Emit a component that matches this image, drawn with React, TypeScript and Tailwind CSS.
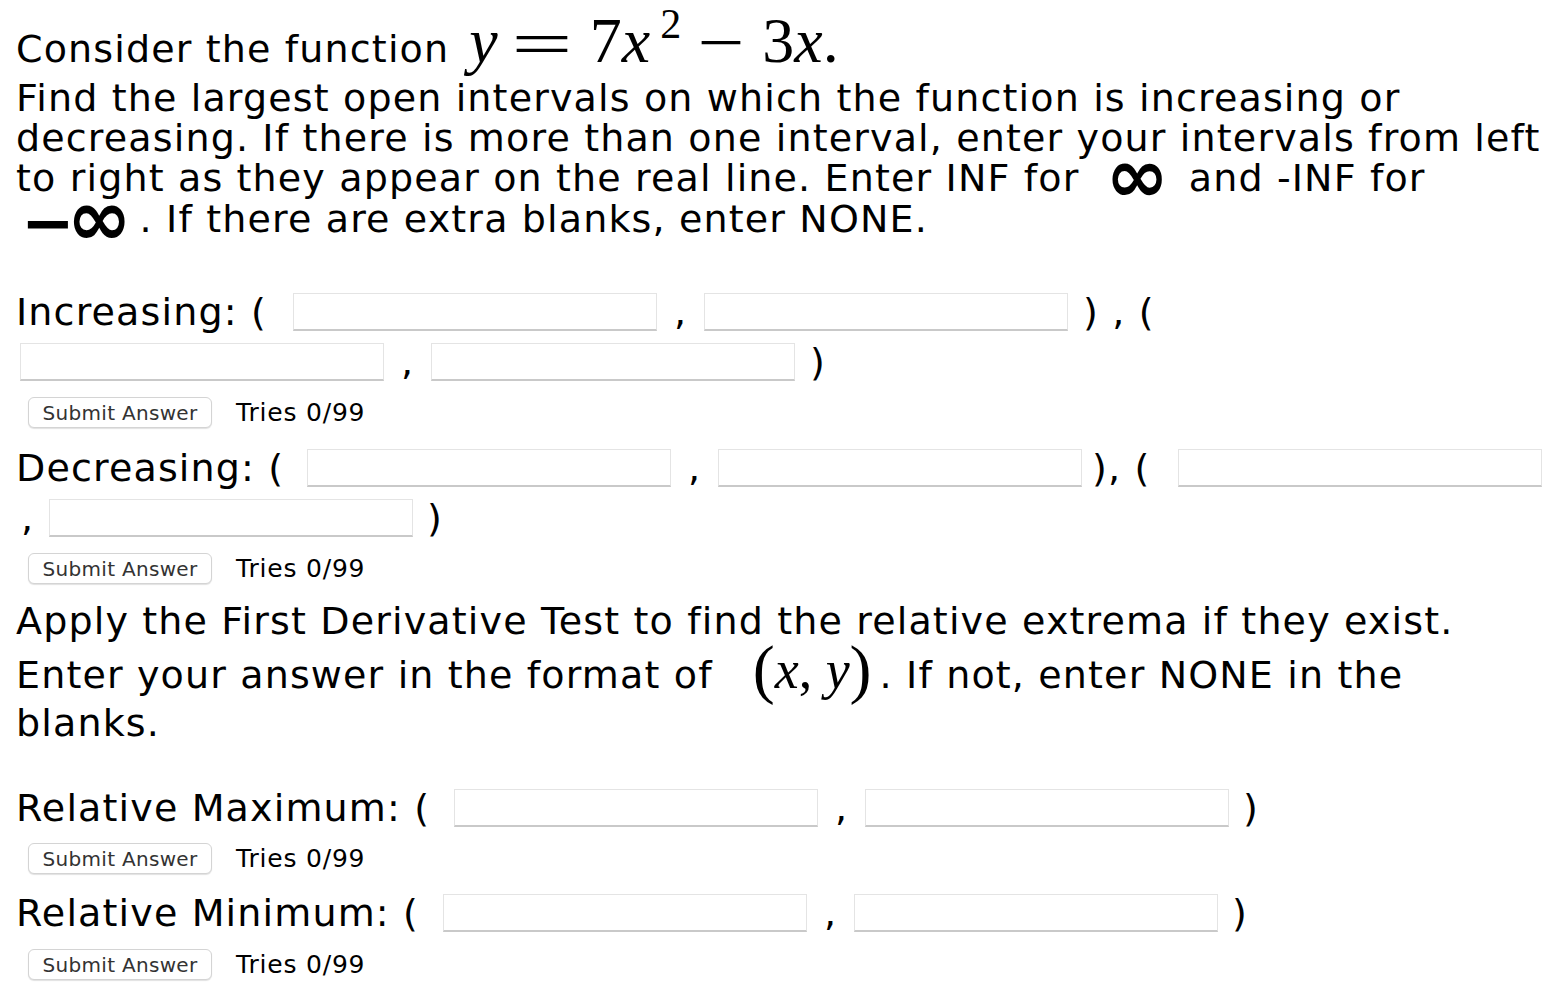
import React from "react";

const sans = { fontFamily: '"DejaVu Sans", Verdana, sans-serif' };
const serif = { fontFamily: '"Liberation Serif", "Times New Roman", serif' };

function Blank({ className = "" }: { className?: string }) {
  return (
    <input
      type="text"
      className={`h-[38px] w-[364px] shrink-0 bg-white border border-[#e4e4e4] border-b-2 border-b-[#c9c9c9] outline-none ${className}`}
    />
  );
}

function Comma() {
  return <span className="w-[47px] shrink-0 text-center">,</span>;
}

function SubmitRow() {
  return (
    <div className="flex items-center h-[31px] pl-[12px]">
      <button className="h-[31px] w-[184px] rounded-[6px] border border-[#d4d4d4] bg-white text-[20px] tracking-[0.3px] text-[#333] shadow-[0_1px_1px_rgba(0,0,0,0.12)]">
        Submit Answer
      </button>
      <span className="ml-[24px] text-[25px] tracking-[0.8px] text-black">Tries 0/99</span>
    </div>
  );
}

function M({ children }: { children: React.ReactNode }) {
  return <i className="italic">{children}</i>;
}

// big bold glyphs for ∞ and the leading minus sign
function Big({ children, className = "" }: { children: React.ReactNode; className?: string }) {
  return <span className={`relative inline-block leading-[0] font-bold tracking-normal ${className}`}>{children}</span>;
}

export default function App() {
  return (
    <div className="bg-white text-black min-h-screen pl-[16px] pt-[20px] text-[38px] tracking-[1.15px] leading-none whitespace-nowrap" style={sans}>
      {/* Intro */}
      <div className="h-[58px] leading-[58px]">
        <span>Consider the function</span>
        <span className="inline-block ml-[20px] text-[64px] leading-[0] tracking-normal" style={serif}>
          <M>y</M>
          <span className="relative top-[3px] inline-block ml-[26px] mr-[30px] scale-x-[1.7]">=</span>
          7<M>x</M>
          <span className="relative -top-[24px] ml-[10px] text-[42px]">2</span>
          <span className="relative top-[2px] inline-block ml-[22px] mr-[23px] scale-x-[1.3]">−</span>
          3<M>x</M>.
        </span>
      </div>
      <div className="h-[40px] leading-[40px]">Find the largest open intervals on which the function is increasing or</div>
      <div className="h-[40px] leading-[40px]">decreasing. If there is more than one interval, enter your intervals from left</div>
      <div className="h-[40px] leading-[40px]">
        to right as they appear on the real line. Enter INF for
        <Big className="ml-[26px] mr-[20px] top-[11px] text-[76px]">∞</Big>
        and -INF for
      </div>
      <div className="h-[42px] leading-[42px]">
        <Big className="ml-[5px] -mr-[8px] top-[13px] text-[64px]">−</Big>
        <Big className="mr-[8px] top-[13px] text-[78px]">∞</Big>. If there are extra blanks, enter NONE.
      </div>

      {/* Increasing */}
      <div className="flex items-center h-[38px] mt-[53px]">
        <span className="w-[277px] shrink-0">Increasing: (</span>
        <Blank />
        <Comma />
        <Blank />
        <span className="ml-[15px]">) , (</span>
      </div>
      <div className="flex items-center h-[38px] mt-[12px]">
        <Blank className="ml-[4px]" />
        <Comma />
        <Blank />
        <span className="ml-[15px]">)</span>
      </div>
      <div className="mt-[16px]">
        <SubmitRow />
      </div>

      {/* Decreasing */}
      <div className="flex items-center h-[38px] mt-[21px]">
        <span className="w-[291px] shrink-0">Decreasing: (</span>
        <Blank />
        <Comma />
        <Blank />
        <span className="w-[96px] shrink-0 pl-[10px]">), (</span>
        <Blank />
      </div>
      <div className="flex items-center h-[38px] mt-[12px]">
        <span className="w-[33px] shrink-0 pl-[5px]">,</span>
        <Blank />
        <span className="ml-[14px]">)</span>
      </div>
      <div className="mt-[16px]">
        <SubmitRow />
      </div>

      {/* Extrema */}
      <div className="h-[48px] leading-[48px] mt-[13px]">Apply the First Derivative Test to find the relative extrema if they exist.</div>
      <div className="h-[54px] leading-[54px] mt-[3px]">
        Enter your answer in the format of
        <span className="inline-block ml-[40px] mr-[8px] leading-[0] tracking-normal" style={serif}>
          <span className="relative top-[3px] text-[66px]">(</span>
          <span className="text-[54px]">
            <M>x</M>, <M>y</M>
          </span>
          <span className="relative top-[3px] text-[66px]">)</span>
        </span>
        . If not, enter NONE in the
      </div>
      <div className="h-[42px] leading-[42px]">blanks.</div>

      <div className="flex items-center h-[38px] mt-[45px]">
        <span className="w-[438px] shrink-0">Relative Maximum: (</span>
        <Blank />
        <Comma />
        <Blank />
        <span className="ml-[14px]">)</span>
      </div>
      <div className="mt-[16px]">
        <SubmitRow />
      </div>

      <div className="flex items-center h-[38px] mt-[20px]">
        <span className="w-[427px] shrink-0">Relative Minimum: (</span>
        <Blank />
        <Comma />
        <Blank />
        <span className="ml-[14px]">)</span>
      </div>
      <div className="mt-[17px]">
        <SubmitRow />
      </div>
    </div>
  );
}
